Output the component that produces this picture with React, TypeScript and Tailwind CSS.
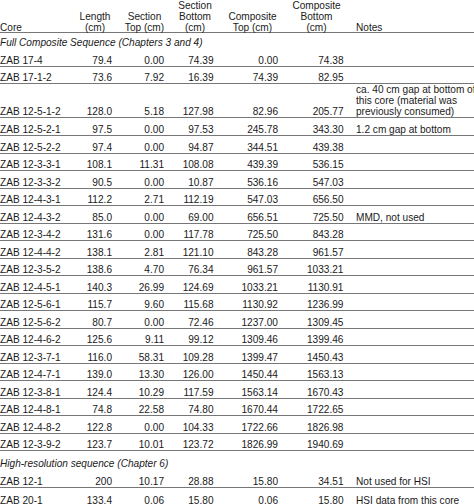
import React from "react";

type Row = {
  core: string;
  len: string;
  st: string;
  sb: string;
  ct: string;
  cb: string;
  note?: React.ReactNode;
  h: string;
};

const rowH = "h-[17.5px]";

const full: Row[] = [
  { core: "ZAB 17-4", len: "79.4", st: "0.00", sb: "74.39", ct: "0.00", cb: "74.38", h: "h-[19px]" },
  { core: "ZAB 17-1-2", len: "73.6", st: "7.92", sb: "16.39", ct: "74.39", cb: "82.95", h: "h-[17px]" },
  {
    core: "ZAB 12-5-1-2",
    len: "128.0",
    st: "5.18",
    sb: "127.98",
    ct: "82.96",
    cb: "205.77",
    note: (
      <>
        ca. 40 cm gap at bottom of
        <br />
        this core (material was
        <br />
        previously consumed)
      </>
    ),
    h: "h-[34px]",
  },
  { core: "ZAB 12-5-2-1", len: "97.5", st: "0.00", sb: "97.53", ct: "245.78", cb: "343.30", note: "1.2 cm gap at bottom", h: "h-[18px]" },
  { core: "ZAB 12-5-2-2", len: "97.4", st: "0.00", sb: "94.87", ct: "344.51", cb: "439.38", h: rowH },
  { core: "ZAB 12-3-3-1", len: "108.1", st: "11.31", sb: "108.08", ct: "439.39", cb: "536.15", h: rowH },
  { core: "ZAB 12-3-3-2", len: "90.5", st: "0.00", sb: "10.87", ct: "536.16", cb: "547.03", h: rowH },
  { core: "ZAB 12-4-3-1", len: "112.2", st: "2.71", sb: "112.19", ct: "547.03", cb: "656.50", h: rowH },
  { core: "ZAB 12-4-3-2", len: "85.0", st: "0.00", sb: "69.00", ct: "656.51", cb: "725.50", note: "MMD, not used", h: rowH },
  { core: "ZAB 12-3-4-2", len: "131.6", st: "0.00", sb: "117.78", ct: "725.50", cb: "843.28", h: rowH },
  { core: "ZAB 12-4-4-2", len: "138.1", st: "2.81", sb: "121.10", ct: "843.28", cb: "961.57", h: rowH },
  { core: "ZAB 12-3-5-2", len: "138.6", st: "4.70", sb: "76.34", ct: "961.57", cb: "1033.21", h: rowH },
  { core: "ZAB 12-4-5-1", len: "140.3", st: "26.99", sb: "124.69", ct: "1033.21", cb: "1130.91", h: rowH },
  { core: "ZAB 12-5-6-1", len: "115.7", st: "9.60", sb: "115.68", ct: "1130.92", cb: "1236.99", h: rowH },
  { core: "ZAB 12-5-6-2", len: "80.7", st: "0.00", sb: "72.46", ct: "1237.00", cb: "1309.45", h: rowH },
  { core: "ZAB 12-4-6-2", len: "125.6", st: "9.11", sb: "99.12", ct: "1309.46", cb: "1399.46", h: rowH },
  { core: "ZAB 12-3-7-1", len: "116.0", st: "58.31", sb: "109.28", ct: "1399.47", cb: "1450.43", h: rowH },
  { core: "ZAB 12-4-7-1", len: "139.0", st: "13.30", sb: "126.00", ct: "1450.44", cb: "1563.13", h: rowH },
  { core: "ZAB 12-3-8-1", len: "124.4", st: "10.29", sb: "117.59", ct: "1563.14", cb: "1670.43", h: rowH },
  { core: "ZAB 12-4-8-1", len: "74.8", st: "22.58", sb: "74.80", ct: "1670.44", cb: "1722.65", h: rowH },
  { core: "ZAB 12-4-8-2", len: "122.8", st: "0.00", sb: "104.33", ct: "1722.66", cb: "1826.98", h: rowH },
  { core: "ZAB 12-3-9-2", len: "123.7", st: "10.01", sb: "123.72", ct: "1826.99", cb: "1940.69", h: rowH },
];

const hires: Row[] = [
  { core: "ZAB 12-1", len: "200", st: "10.17", sb: "28.88", ct: "15.80", cb: "34.51", note: "Not used for HSI", h: "h-[19px]" },
  { core: "ZAB 20-1", len: "133.4", st: "0.06", sb: "15.80", ct: "0.06", cb: "15.80", note: "HSI data from this core", h: "h-[19px]" },
];

function DataRow({ r }: { r: Row }) {
  return (
    <div
      className={`grid grid-cols-[80px_32px_52px_49.5px_64.5px_65.5px_1fr] items-end border-b border-[#777777] ${r.h}`}
    >
      <div className="whitespace-nowrap">{r.core}</div>
      <div className="whitespace-nowrap text-right">{r.len}</div>
      <div className="whitespace-nowrap text-right">{r.st}</div>
      <div className="whitespace-nowrap text-right">{r.sb}</div>
      <div className="whitespace-nowrap text-right">{r.ct}</div>
      <div className="whitespace-nowrap text-right">{r.cb}</div>
      <div className="whitespace-nowrap pl-[12.5px]">{r.note}</div>
    </div>
  );
}

export default function App() {
  return (
    <div
      className="w-[474px] h-[504px] overflow-hidden bg-white text-[10.1px] leading-[11px] text-[#1a1a1a]"
      style={{ fontFamily: '"Liberation Sans", Arial, sans-serif' }}
    >
      {/* header */}
      <div className="grid h-[33px] grid-cols-[75px_40px_59px_42px_73px_55px_1fr] items-end border-b border-[#777777]">
        <div>Core</div>
        <div className="text-center whitespace-nowrap">
          Length
          <br />
          (cm)
        </div>
        <div className="text-center whitespace-nowrap">
          Section
          <br />
          Top (cm)
        </div>
        <div className="text-center whitespace-nowrap">
          Section
          <br />
          Bottom
          <br />
          (cm)
        </div>
        <div className="text-center whitespace-nowrap">
          Composite
          <br />
          Top (cm)
        </div>
        <div className="text-center whitespace-nowrap">
          Composite
          <br />
          Bottom
          <br />
          (cm)
        </div>
        <div className="pl-[12px]">Notes</div>
      </div>

      <div className="flex h-[15px] items-end italic whitespace-nowrap">
        Full Composite Sequence (Chapters 3 and 4)
      </div>
      {full.map((r) => (
        <DataRow key={r.core} r={r} />
      ))}

      <div className="flex h-[18px] items-end italic whitespace-nowrap">
        High-resolution sequence (Chapter 6)
      </div>
      {hires.map((r) => (
        <DataRow key={r.core} r={r} />
      ))}
    </div>
  );
}
